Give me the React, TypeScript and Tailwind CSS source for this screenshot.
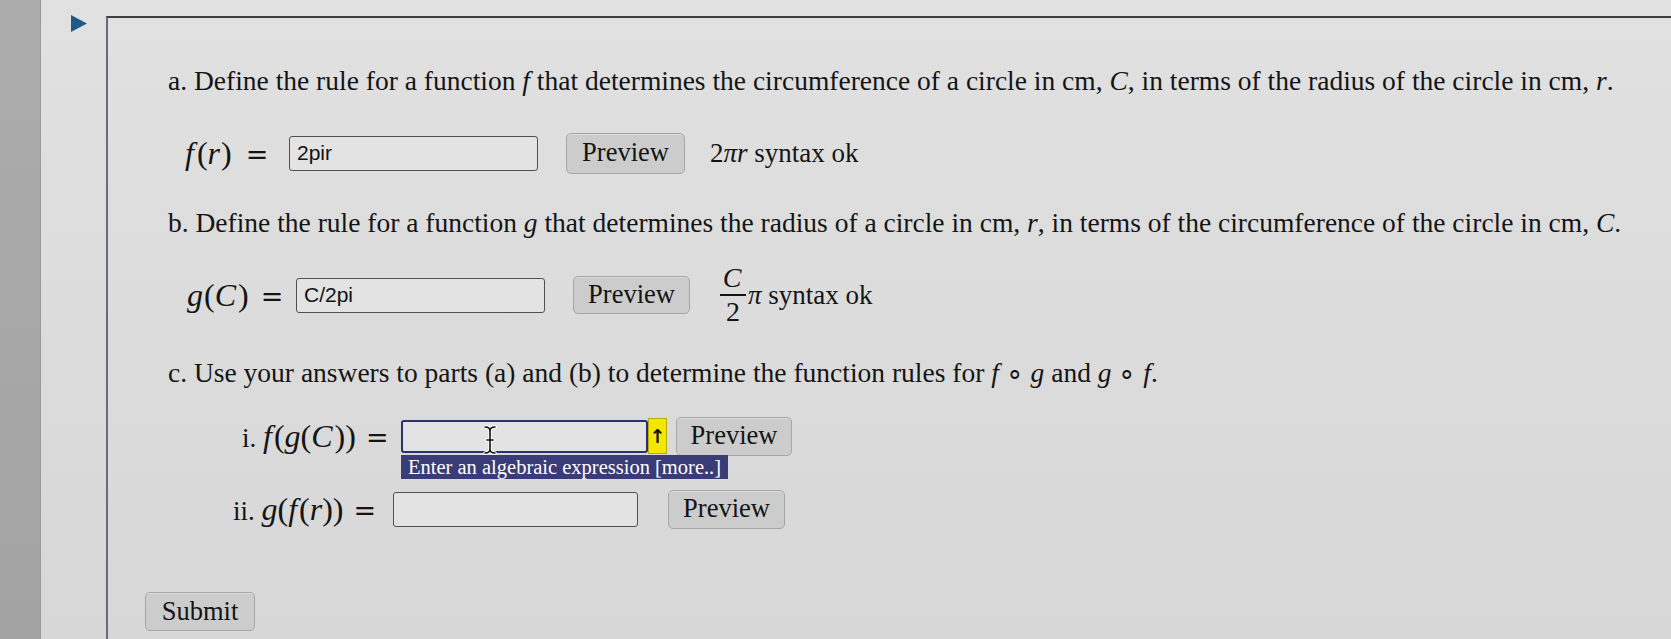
import React from "react";

const serif = "font-['Liberation_Serif','Times_New_Roman',serif]";

function I({ children, r = "" }: { children: React.ReactNode; r?: string }) {
  return <span className={`italic ${r}`}>{children}</span>;
}

function Eq({ m = "ml-[10px]" }: { m?: string }) {
  return <span className={`${m} font-['DejaVu_Serif',serif] text-[27px]`}>=</span>;
}

function Btn({ w, h, children }: { w: string; h: string; children: React.ReactNode }) {
  return (
    <div
      className={`${w} ${h} flex items-center justify-center rounded-[5px] border border-[#a6a6a6] bg-[#cccccc] text-[26.5px] text-[#131313] shadow-[inset_0_1px_0_#dcdcdc]`}
    >
      {children}
    </div>
  );
}

function Field({ w, h, value, focused }: { w: string; h: string; value?: string; focused?: boolean }) {
  return (
    <div
      className={`${w} ${h} flex items-center rounded-[3px] bg-[#e3e3e3] px-[7px] font-['Liberation_Sans',Arial,sans-serif] text-[21px] text-[#111] ${
        focused ? "border-2 border-[#2b3170]" : "border-[1.5px] border-[#505050]"
      }`}
    >
      {value}
    </div>
  );
}

export default function App() {
  return (
    <div className={`relative flex h-[639px] w-[1671px] overflow-hidden bg-gradient-to-b from-[#e1e1e1] to-[#d7d7d7] text-[#141414] ${serif}`}>
      <div className="w-[41px] shrink-0 bg-gradient-to-b from-[#acacac] to-[#a3a3a3] border-r border-[#9a9a9a]" />
      <div className="w-[65px] shrink-0 pl-[29px] pt-[14px]">
        <svg width="18" height="19" viewBox="0 0 18 19">
          <polygon points="1,1 17,9.5 1,18" fill="#1e5a88" />
        </svg>
      </div>
      <div className="flex-1 mt-[16px] border-l-2 border-t-2 border-l-[#6b6a7c] border-t-[#3f3f3f] pl-[37px]">
        {/* a */}
        <div className="mt-[47px] h-[32px] pl-[23px] text-[27.5px] leading-[32px] whitespace-nowrap">
          a. Define the rule for a function <I>f</I> that determines the circumference of a circle in cm, <I>C</I>, in terms of the radius of the circle in cm, <I>r</I>.
        </div>
        {/* f row */}
        <div className="mt-[35px] flex h-[42px] items-center pl-[40px] text-[27px]">
          <div className="w-[104px] whitespace-nowrap text-[32px]">
            <I r="mr-[3px]">f</I>(<I r="mr-[1px]">r</I>)<Eq m="ml-[14px]" />
          </div>
          <Field w="w-[249px]" h="h-[35px]" value="2pir" />
          <div className="ml-[28px]">
            <Btn w="w-[119px]" h="h-[41px]">Preview</Btn>
          </div>
          <div className="ml-[25px] whitespace-nowrap">
            2<I>πr</I> syntax ok
          </div>
        </div>
        {/* b */}
        <div className="mt-[33px] h-[32px] pl-[23px] text-[27.5px] leading-[32px] whitespace-nowrap">
          b. Define the rule for a function <I>g</I> that determines the radius of a circle in cm, <I>r</I>, in terms of the circumference of the circle in cm, <I>C</I>.
        </div>
        {/* g row */}
        <div className="mt-[35px] flex h-[42px] items-center pl-[42px] text-[27px]">
          <div className="w-[109px] whitespace-nowrap text-[32px]">
            <I r="mr-[1px]">g</I>(<I r="mr-[2px]">C</I>)<Eq m="ml-[12px]" />
          </div>
          <Field w="w-[249px]" h="h-[35px]" value="C/2pi" />
          <div className="ml-[28px]">
            <Btn w="w-[117px]" h="h-[38px]">Preview</Btn>
          </div>
          <div className="ml-[30px] flex items-center whitespace-nowrap">
            <div className="flex flex-col items-center leading-[26px] text-[28px]">
              <span className="italic px-[1px] pr-[3px]">C</span>
              <span className="my-[3px] h-[1.5px] w-[26px] bg-[#141414]" />
              <span>2</span>
            </div>
            <span className="ml-[2px]">
              <I>π</I> syntax ok
            </span>
          </div>
        </div>
        {/* c */}
        <div className="mt-[41px] h-[32px] pl-[23px] text-[27.5px] leading-[32px] whitespace-nowrap">
          c. Use your answers to parts (a) and (b) to determine the function rules for <I>f</I> ∘ <I>g</I> and <I>g</I> ∘ <I>f</I>.
        </div>
        {/* i row */}
        <div className="mt-[27px] flex h-[40px] items-center pl-[97px] text-[27px]">
          <div className="w-[159px] whitespace-nowrap">
            i.{" "}
            <span className="text-[32px]">
              <I r="mr-[2px]">f</I>(<I>g</I>(<I r="mr-[2px]">C</I>))<Eq />
            </span>
          </div>
          <div className="relative flex items-center">
            <Field w="w-[247px]" h="h-[33px]" focused />
            <div className="flex h-[36px] w-[19px] items-center justify-center border border-[#b9ad00] bg-[#f3e700] font-['DejaVu_Sans',sans-serif] text-[19px] font-bold leading-none text-[#111]">
              ↑
            </div>
            <svg className="absolute left-[81px] top-[7px]" width="16" height="30" viewBox="0 0 16 30">
              <path d="M3 2 Q8 2 8 6 L8 24 Q8 28 3 28 M13 2 Q8 2 8 6 M8 24 Q8 28 13 28 M5 15 L11 15" fill="none" stroke="#fff" strokeWidth="3.5" strokeLinecap="round" />
              <path d="M3 2 Q8 2 8 6 L8 24 Q8 28 3 28 M13 2 Q8 2 8 6 M8 24 Q8 28 13 28 M5 15 L11 15" fill="none" stroke="#111" strokeWidth="1.6" strokeLinecap="round" />
            </svg>
            <div className="absolute left-0 top-[37px] whitespace-nowrap bg-[#3a3c78] px-[7px] text-[20.5px] leading-[24px] text-white">
              Enter an algebraic expression [more..]
            </div>
          </div>
          <div className="ml-[9px]">
            <Btn w="w-[116px]" h="h-[39px]">Preview</Btn>
          </div>
        </div>
        {/* ii row */}
        <div className="mt-[33px] flex h-[40px] items-center pl-[88px] text-[27px]">
          <div className="w-[160px] whitespace-nowrap">
            ii.{" "}
            <span className="text-[32px]">
              <I>g</I>(<I r="mr-[2px]">f</I>(<I>r</I>))<Eq />
            </span>
          </div>
          <Field w="w-[245px]" h="h-[35px]" />
          <div className="ml-[30px]">
            <Btn w="w-[117px]" h="h-[39px]">Preview</Btn>
          </div>
        </div>
        {/* submit */}
        <div className="mt-[63px]">
          <Btn w="w-[110px]" h="h-[39px]">Submit</Btn>
        </div>
      </div>
    </div>
  );
}
